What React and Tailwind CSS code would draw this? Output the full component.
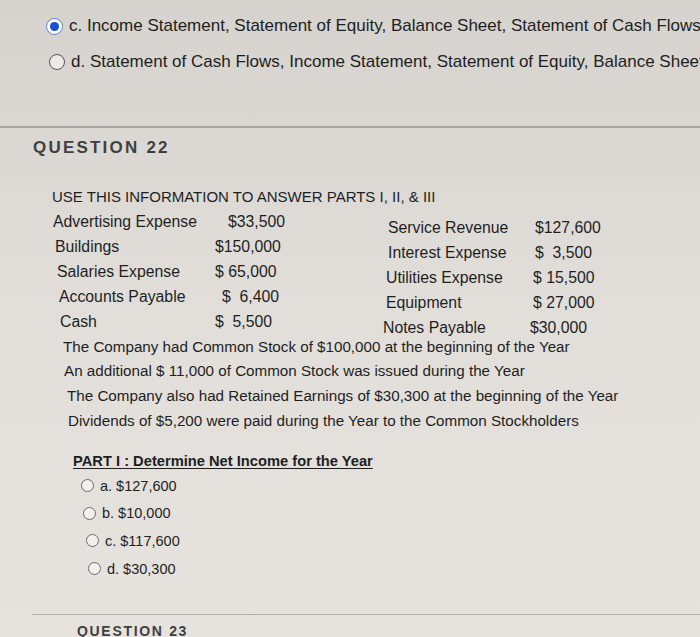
import React from "react";

function Radio({ checked, small }) {
  if (checked) {
    return (
      <span className="flex h-[17px] w-[17px] shrink-0 items-center justify-center rounded-full border-[1.5px] border-[#5a7fd0] bg-white">
        <span className="h-[9px] w-[9px] rounded-full bg-[#1a4fd6]" />
      </span>
    );
  }
  return (
    <span
      className={
        small
          ? "h-[13px] w-[13px] shrink-0 rounded-full border-[1.5px] border-[#6a6a6a] bg-[#f2f0ec]"
          : "h-[16px] w-[16px] shrink-0 rounded-full border-[1.5px] border-[#555] bg-[#eeebe7]"
      }
    />
  );
}

function App() {
  const leftRows = [
    { label: "Advertising Expense", value: "$33,500", lpad: "pl-[53px]", vpad: "pl-[228px]" },
    { label: "Buildings", value: "$150,000", lpad: "pl-[55px]", vpad: "pl-[215px]" },
    { label: "Salaries Expense", value: "$ 65,000", lpad: "pl-[57px]", vpad: "pl-[215px]" },
    { label: "Accounts Payable", value: "$  6,400", lpad: "pl-[59px]", vpad: "pl-[222px]" },
    { label: "Cash", value: "$  5,500", lpad: "pl-[60px]", vpad: "pl-[215px]" }
  ];

  const rightRows = [
    { label: "Service Revenue", value: "$127,600" },
    { label: "Interest Expense", value: "$  3,500" },
    { label: "Utilities Expense", value: "$ 15,500" },
    { label: "Equipment", value: "$ 27,000" },
    { label: "Notes Payable", value: "$30,000" }
  ];

  const options = [
    { text: "a. $127,600", pad: "pl-[81px]" },
    { text: "b. $10,000", pad: "pl-[83px]" },
    { text: "c. $117,600", pad: "pl-[86px]" },
    { text: "d. $30,300", pad: "pl-[88px]" }
  ];

  return (
    <div className="h-[637px] w-[700px] overflow-hidden bg-gradient-to-b from-[#d6d3cf] via-[#e2dfdb] to-[#e6e3df] font-['Liberation_Sans',Arial,sans-serif] text-[#1e1e1e]">
      {/* previous question answers */}
      <div className="flex items-center gap-[6px] whitespace-nowrap pl-[46px] pt-[16px] text-[17px] leading-[20px]">
        <Radio checked />
        <span>c. Income Statement, Statement of Equity, Balance Sheet, Statement of Cash Flows</span>
      </div>
      <div className="mt-[16px] flex items-center gap-[6px] whitespace-nowrap pl-[49px] text-[17px] leading-[20px]">
        <Radio />
        <span>d. Statement of Cash Flows, Income Statement, Statement of Equity, Balance Sheet</span>
      </div>

      <div className="mt-[54px] h-[1.5px] w-full bg-[#a9a6a2]" />

      <div className="pl-[33px] pt-[10px] text-[17px] font-bold leading-[20px] tracking-[0.13em] text-[#3f3f3f]">
        QUESTION 22
      </div>

      {/* info block */}
      <div className="mt-[29px] whitespace-nowrap pl-[52px] text-[15px] leading-[20px]">
        USE THIS INFORMATION TO ANSWER PARTS I, II, &amp; III
      </div>

      <div className="flex text-[15.8px] leading-[20px]">
        <div className="w-[388px] shrink-0">
          {leftRows.map((row) => (
            <div key={row.label} className={"relative mt-[5px] h-[20px] whitespace-pre " + row.lpad}>
              <span>{row.label}</span>
              <span className={"absolute left-0 top-0 " + row.vpad}>{row.value}</span>
            </div>
          ))}
        </div>
        <div className="pt-[6px]">
          {rightRows.map((row, i) => (
            <div
              key={row.label}
              className={
                "mt-[5px] flex whitespace-pre " +
                (i === 4 ? "-ml-[5px]" : i >= 2 ? "-ml-[2px]" : "")
              }
            >
              <span className="w-[147px]">{row.label}</span>
              <span>{row.value}</span>
            </div>
          ))}
        </div>
      </div>

      <div className="-mt-[1px] space-y-[4.7px] whitespace-nowrap text-[15.2px] leading-[20px]">
        <div className="pl-[63px]">The Company had Common Stock of $100,000 at the beginning of the Year</div>
        <div className="pl-[64px]">An additional $ 11,000 of Common Stock was issued during the Year</div>
        <div className="pl-[67px]">The Company also had Retained Earnings of $30,300 at the beginning of the Year</div>
        <div className="pl-[68px]">Dividends of $5,200 were paid during the Year to the Common Stockholders</div>
      </div>

      {/* part I */}
      <div className="mt-[18px] pl-[73px]">
        <span className="text-[14.7px] font-bold leading-[18px] underline decoration-1 underline-offset-2">
          PART I : Determine Net Income for the Year
        </span>
      </div>

      <div className="mt-[4px]">
        {options.map((opt, i) => (
          <div
            key={opt.text}
            className={"flex items-center gap-[6px] text-[14.5px] leading-[18px] " + opt.pad + (i === 0 ? "" : " mt-[9.7px]")}
          >
            <Radio small />
            <span>{opt.text}</span>
          </div>
        ))}
      </div>

      <div className="ml-[32px] mt-[36px] h-[1.5px] bg-[#b3b0ac]" />

      <div className="pl-[77px] pt-[7px] text-[14px] font-bold leading-[18px] tracking-[0.12em] text-[#3f3f3f]">
        QUESTION 23
      </div>
    </div>
  );
}

export default App;
